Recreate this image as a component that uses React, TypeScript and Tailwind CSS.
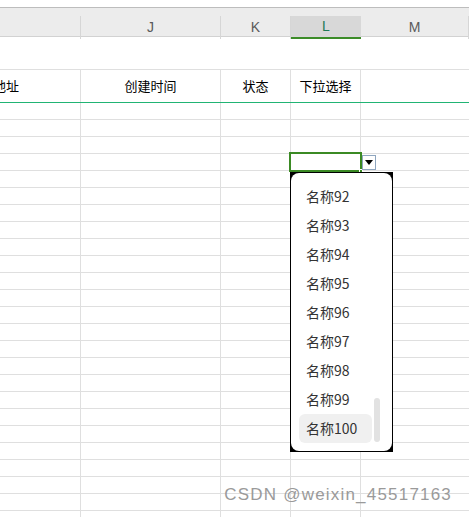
const cols = "grid grid-cols-[81px_140px_70px_70px_1fr]";
const line = "border-[#dfdfdf]";
const cjk = "font-['Noto_Sans_CJK_SC','Noto_Sans',sans-serif]";

const options = [92, 93, 94, 95, 96, 97, 98, 99, 100];

function ColumnHeader() {
  const letters = ["", "J", "K", "L", "M"];
  return (
    <div className={`${cols} h-[21px] border-b border-[#d2d2d2] bg-[#ececec] font-['Liberation_Sans',sans-serif] text-[14px] text-[#5a5a5a]`}>
      {letters.map((l, i) => (
        <div
          key={i}
          className={
            l === "L"
              ? "flex items-center justify-center border-b-2 border-[#3c8c28] bg-[#d8d8d8] text-[#1e7a55]"
              : "flex items-center justify-center border-r border-[#d6d6d6]"
          }
        >
          {l}
        </div>
      ))}
    </div>
  );
}

function TitleRow() {
  const titles = ["", "创建时间", "状态", "下拉选择", ""];
  return (
    <div className={`${cols} h-[33px] border-b border-[#21b474] ${cjk} text-[13px] text-black`}>
      {titles.map((t, i) => (
        <div
          key={i}
          className={`flex items-center overflow-hidden ${i === 0 ? "justify-start" : "justify-center"} ${i < 4 ? `border-r ${line}` : ""}`}
        >
          {i === 0 ? <span className="-ml-[7px] shrink-0">地址</span> : t}
        </div>
      ))}
    </div>
  );
}

// the open list of the data-validation cell
function Dropdown() {
  return (
    <div className="absolute left-[-1px] top-[18px] z-10 w-[103px] bg-black p-px">
      <div className={`relative flex flex-col rounded-[8px] bg-white pb-[8px] pl-[8px] pr-[20px] pt-[9px] ${cjk} text-[14px] text-[#333]`}>
        {options.map((n) => (
          <div
            key={n}
            className={`flex h-[29px] items-center rounded-[6px] px-[7px] ${n === 100 ? "bg-[#f0f0f0]" : ""}`}
          >
            名称{n}
          </div>
        ))}
        <div className="absolute bottom-[9px] right-[12px] h-[44px] w-[6px] rounded-full bg-[#e2e2e2]" />
      </div>
    </div>
  );
}

function SelectedCell() {
  return (
    <div className="relative h-full">
      <div className="absolute inset-[-2px] border-2 border-[#3b8a24]">
        <div className="absolute bottom-[-3px] right-[-3px] h-[4px] w-[4px] border border-white bg-[#3b8a24]" />
      </div>
      <div className="absolute left-[71px] top-px flex h-[15px] w-[14px] items-center justify-center border border-[#8fa6bf] bg-white">
        <svg width="8" height="5" viewBox="0 0 8 5">
          <path d="M0 0h8L4 5z" fill="#000" />
        </svg>
      </div>
      <Dropdown />
    </div>
  );
}

export default function App() {
  const rows = Array.from({ length: 25 }, (_, i) => i);
  return (
    <div className="relative h-[517px] w-full overflow-hidden bg-white">
      <div className="h-[7px]" />
      <div className="h-px bg-[#bdbdbd]" />
      <div className="h-[8px] bg-[#ececec]" />
      <ColumnHeader />
      <div className="h-[33px] border-b border-[#dfdfdf]" />
      <TitleRow />
      {rows.map((r) => (
        <div key={r} className={`${cols} h-[17px]`}>
          {[0, 1, 2, 3, 4].map((c) =>
            r === 3 && c === 3 ? (
              <div key={c} className={`border-b border-r ${line}`}>
                <SelectedCell />
              </div>
            ) : (
              <div key={c} className={`border-b ${line} ${c < 4 ? "border-r" : ""}`} />
            ),
          )}
        </div>
      ))}

      <div className="absolute bottom-[10px] right-[17px] font-['Liberation_Sans',sans-serif] text-[17px] tracking-[1.2px] text-[#9a9a9a]">
        CSDN @weixin_45517163
      </div>
    </div>
  );
}
